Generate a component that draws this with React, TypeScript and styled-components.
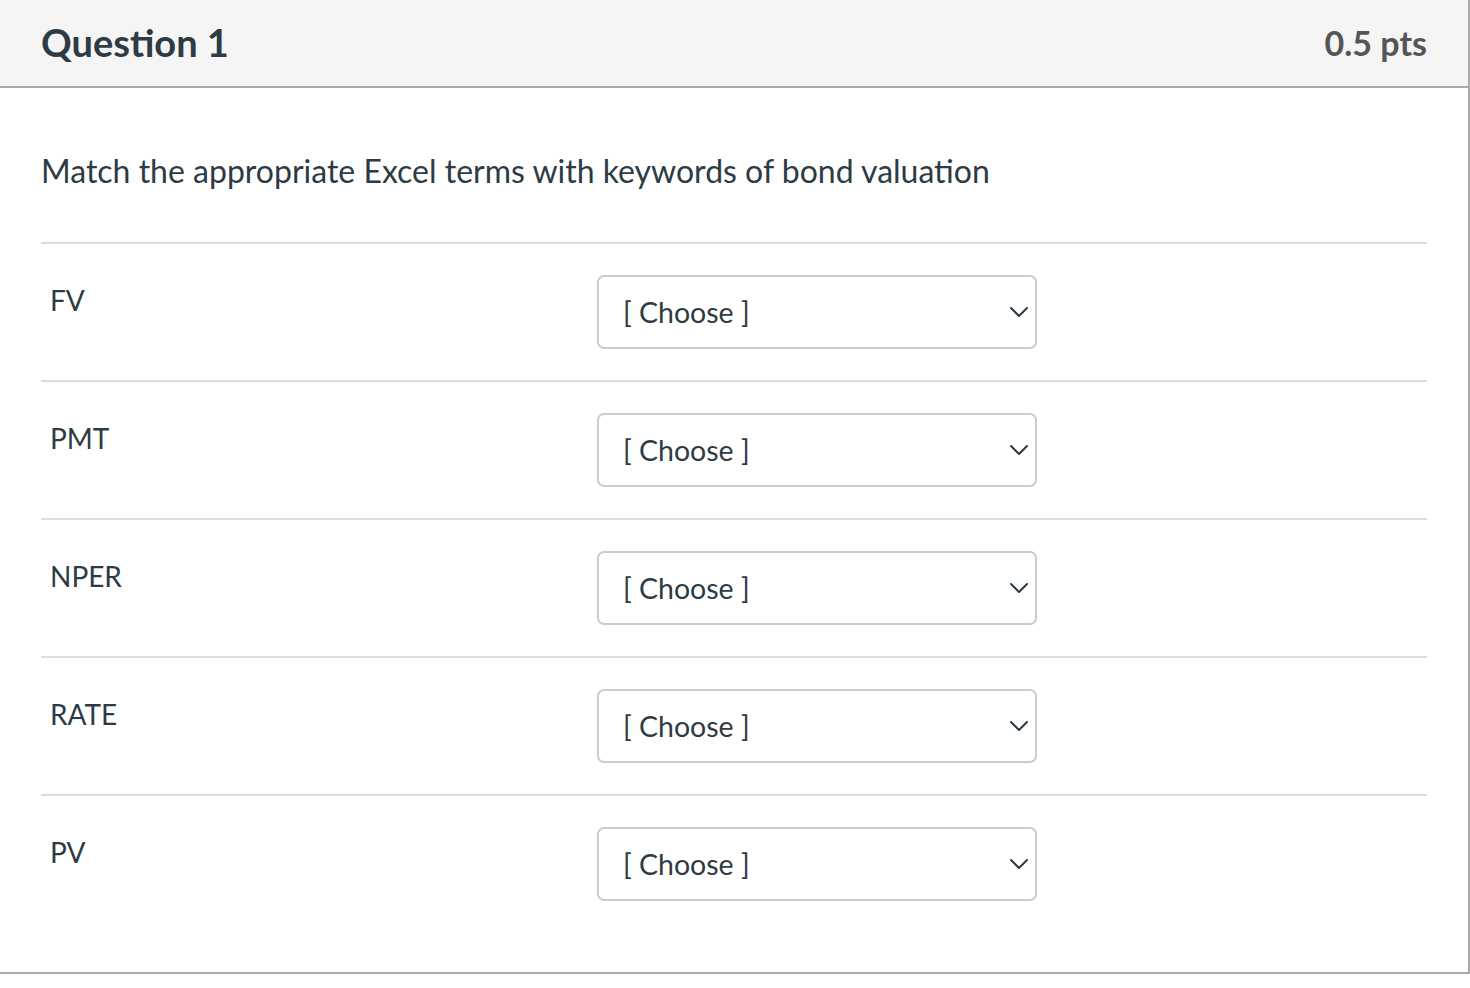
import React from "react";
import styled, { createGlobalStyle } from "styled-components";

const GlobalStyle = createGlobalStyle`
  html, body {
    margin: 0;
    padding: 0;
    background: #ffffff;
  }
  body {
    font-family: Lato, "Liberation Sans", sans-serif;
    color: #2d3b45;
  }
`;

const Card = styled.div`
  width: 1470px;
  box-sizing: border-box;
  border-right: 2px solid #aaaaaa;
  border-bottom: 2px solid #aaaaaa;
  background: #ffffff;
`;

const Header = styled.div`
  height: 86px;
  box-sizing: content-box;
  background: #f5f5f5;
  border-bottom: 2px solid #aaaaaa;
  display: flex;
  align-items: center;
  justify-content: space-between;
  padding: 0 41px;
`;

const Title = styled.h2`
  margin: 0 0 3px;
  font-size: 38px;
  font-weight: 700;
  color: #2d3b45;
  line-height: 1;
`;

const Points = styled.div`
  margin: 0 0 1px;
  font-size: 34px;
  font-weight: 700;
  color: #555555;
  line-height: 1;
`;

const Body = styled.div`
  padding: 59px 41px 40px;
  display: flex;
  flex-direction: column;
`;

const QuestionText = styled.p`
  margin: 0 0 47px;
  font-size: 32px;
  line-height: 48px;
  color: #2d3b45;
`;

const Row = styled.div`
  display: flex;
  align-items: flex-start;
  border-top: 2px solid #dddddd;
  padding: 31px 0;
`;

const Label = styled.div`
  flex: 0 0 547px;
  padding: 4px 0 0 9px;
  font-size: 28px;
  line-height: 42px;
  color: #2d3b45;
`;

const SelectBox = styled.div`
  width: 440px;
  height: 74px;
  box-sizing: border-box;
  border: 2px solid #cccccc;
  border-radius: 7px;
  background: #ffffff;
  display: flex;
  align-items: center;
  justify-content: space-between;
  padding: 0 6px 0 24px;
  font-size: 28.5px;
  color: #2d3b45;
`;

const Chevron = () => (
  <svg width="20" height="12" viewBox="0 0 20 12" fill="none">
    <path
      d="M2 2 L10 10 L18 2"
      stroke="#2d3b45"
      strokeWidth="2"
      strokeLinecap="round"
      strokeLinejoin="round"
    />
  </svg>
);

const terms = ["FV", "PMT", "NPER", "RATE", "PV"];

export default function App() {
  return (
    <>
      <GlobalStyle />
      <Card>
        <Header>
          <Title>Question 1</Title>
          <Points>0.5 pts</Points>
        </Header>
        <Body>
          <QuestionText>
            Match the appropriate Excel terms with keywords of bond valuation
          </QuestionText>
          {terms.map((t) => (
            <Row key={t}>
              <Label>{t}</Label>
              <SelectBox>
                <span>[ Choose ]</span>
                <Chevron />
              </SelectBox>
            </Row>
          ))}
        </Body>
      </Card>
    </>
  );
}
